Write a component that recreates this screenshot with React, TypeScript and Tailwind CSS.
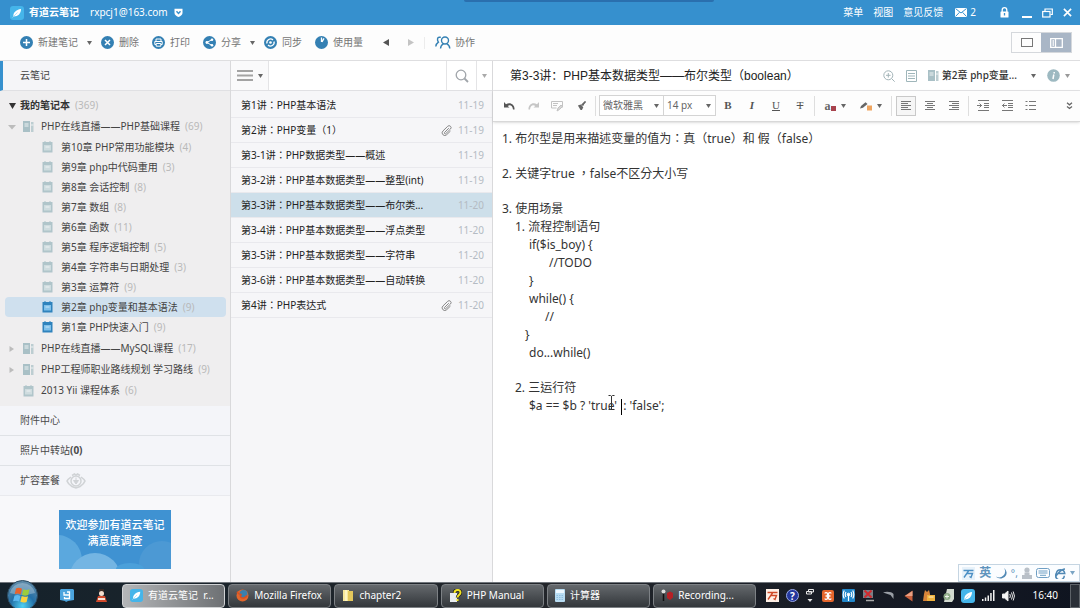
import { useState, type ReactNode } from "react";
import clsx from "clsx";

type Leaf = { name: string; count: number; mine?: boolean };
type Note = { title: string; date: string; clip?: boolean };

const chapters: Leaf[] = [
  { name: "第10章 PHP常用功能模块", count: 4 },
  { name: "第9章 php中代码重用", count: 3 },
  { name: "第8章 会话控制", count: 8 },
  { name: "第7章 数组", count: 8 },
  { name: "第6章 函数", count: 11 },
  { name: "第5章 程序逻辑控制", count: 5 },
  { name: "第4章 字符串与日期处理", count: 3 },
  { name: "第3章 运算符", count: 9 },
  { name: "第2章 php变量和基本语法", count: 9, mine: true },
  { name: "第1章 PHP快速入门", count: 9, mine: true },
];

const notes: Note[] = [
  { title: "第1讲：PHP基本语法", date: "11-19" },
  { title: "第2讲：PHP变量（1）", date: "11-19", clip: true },
  { title: "第3-1讲：PHP数据类型——概述", date: "11-19" },
  { title: "第3-2讲：PHP基本数据类型——整型(int)", date: "11-19" },
  { title: "第3-3讲：PHP基本数据类型——布尔类...", date: "11-20" },
  { title: "第3-4讲：PHP基本数据类型——浮点类型", date: "11-20" },
  { title: "第3-5讲：PHP基本数据类型——字符串", date: "11-20" },
  { title: "第3-6讲：PHP基本数据类型——自动转换", date: "11-20" },
  { title: "第4讲：PHP表达式", date: "11-20", clip: true },
];

function Caret({ className = "text-[#666]" }: { className?: string }) {
  return (
    <svg viewBox="0 0 5 4" className={clsx("h-1 w-[5px] shrink-0", className)} fill="currentColor">
      <path d="M0 0h5L2.5 4z" />
    </svg>
  );
}

/* ---------- title bar ---------- */

function Leafmark({ className }: { className: string }) {
  return (
    <svg viewBox="0 0 14 14" className={className}>
      <rect width="14" height="14" rx="3" fill="#45b5ea" />
      <path d="M3.500 10.500C2.600 7 6 3.500 11 3c0 4.500-2.800 7.600-7.500 7.500z" fill="#fff" />
      <path d="M2.500 11.500L7.500 6.500" stroke="#a5dcf5" strokeWidth=".8" />
    </svg>
  );
}

function TitleBar() {
  return (
    <header className="relative flex h-[25px] shrink-0 items-center bg-[#3690ce] pl-[10px] pr-2 text-[10px] text-white">
      <div className="absolute left-[43%] top-0 h-[2px] w-[250px] rounded-b bg-[#2a6fae]" />
      <Leafmark className="h-[14px] w-[14px]" />
      <span className="ml-[5px] font-bold">有道云笔记</span>
      <span className="ml-[11px]">rxpcj1@163.com</span>
      <svg viewBox="0 0 9 9" className="ml-[6px] h-[9px] w-[9px]">
        <path d="M.5.8h8v4.200C8.500 7 6 8.500 4.500 9 3 8.500.5 7 .5 5z" fill="#fff" />
        <path d="M2.500 3.200l2 2.300 2-2.300" stroke="#3690ce" strokeWidth="1.400" fill="none" />
      </svg>

      <nav className="ml-auto flex items-center gap-[10px]">
        <button type="button">菜单</button>
        <button type="button">视图</button>
        <button type="button">意见反馈</button>
        <button type="button" aria-label="消息" className="ml-0.5 flex items-center gap-[3px]">
          <svg viewBox="0 0 12 9" className="h-[9px] w-3">
            <rect width="12" height="9" fill="#fff" />
            <path d="M.5.5L6 5l5.500-4.500M.5 8.500l4-4.200M11.500 8.500l-4-4.200" stroke="#3690ce" fill="none" />
          </svg>
          2
        </button>
      </nav>
      <div className="ml-6 flex items-center gap-[10px]">
        <button type="button" aria-label="锁定">
          <svg viewBox="0 0 9 11" className="h-[11px] w-[9px]">
            <path d="M2.200 5V3a2.300 2.300 0 014.600 0v2" stroke="#fff" strokeWidth="1.300" fill="none" />
            <rect x=".5" y="4.500" width="8" height="6" rx=".6" fill="#fff" />
            <path d="M4.500 6v2.500" stroke="#3690ce" strokeWidth="1.300" />
          </svg>
        </button>
        <button type="button" aria-label="最小化" className="ml-[3px] flex h-[10px] w-[10px] items-end">
          <span className="h-[2px] w-full bg-white" />
        </button>
        <button type="button" aria-label="还原">
          <svg viewBox="0 0 11 10" className="h-[10px] w-[11px]" fill="none" stroke="#fff" strokeWidth="1.200">
            <path d="M3 3V1h7.300v5.500H8.500" />
            <rect x=".7" y="3.500" width="7.300" height="5.500" />
          </svg>
        </button>
        <button type="button" aria-label="关闭">
          <svg viewBox="0 0 10 10" className="h-[9px] w-[9px]" stroke="#fff" strokeWidth="1.800">
            <path d="M1 1l8 8M9 1L1 9" />
          </svg>
        </button>
      </div>
    </header>
  );
}

/* ---------- main toolbar ---------- */

function Disc({ children }: { children: ReactNode }) {
  return (
    <svg viewBox="0 0 13 13" className="h-[13px] w-[13px]" fill="none" stroke="#fff" strokeWidth="1.500">
      <circle cx="6.500" cy="6.500" r="6.500" fill="#3480b3" stroke="none" />
      {children}
    </svg>
  );
}

function ToolItem({ icon, label, menu }: { icon: ReactNode; label: string; menu?: boolean }) {
  return (
    <>
      <button type="button" className={clsx("flex items-center gap-[5px]", !menu && "mr-[13px]")}>
        {icon}
        {label}
      </button>
      {menu && (
        <button type="button" aria-label={`${label}选项`} className="flex h-5 w-[23px] items-center justify-center">
          <Caret />
        </button>
      )}
    </>
  );
}

function Toolbar() {
  return (
    <div className="flex h-9 shrink-0 items-center border-b border-[#dedee0] bg-[#fdfdfd] pl-5 pr-2 text-[10px] text-[#757575]">
      <ToolItem menu label="新建笔记" icon={<Disc><path d="M6.500 3v7M3 6.500h7" /></Disc>} />
      <ToolItem label="删除" icon={<Disc><path d="M4 4l5 5M9 4L4 9" /></Disc>} />
      <ToolItem
        label="打印"
        icon={
          <Disc>
            <path d="M4 5V3h5v2M4 8.500H2.800V5.500h7.400v3H9M4.200 7.500h4.600v2.700H4.200z" strokeWidth="1" />
          </Disc>
        }
      />
      <ToolItem
        menu
        label="分享"
        icon={
          <Disc>
            <path d="M9 3.500L4 6.500l5 3" strokeWidth="1" />
            <g fill="#fff" stroke="none">
              <circle cx="9" cy="3.700" r="1.300" />
              <circle cx="3.900" cy="6.500" r="1.400" />
              <circle cx="9" cy="9.300" r="1.300" />
            </g>
          </Disc>
        }
      />
      <ToolItem
        label="同步"
        icon={
          <Disc>
            <path d="M3 7.500A3.600 3.600 0 019 4M10 5.500A3.600 3.600 0 014 9" strokeWidth="1.300" />
            <circle cx="6.500" cy="6.500" r="1.300" fill="#fff" stroke="none" />
          </Disc>
        }
      />
      <ToolItem
        label="使用量"
        icon={
          <Disc>
            <path d="M6.500 6V1.500M7 6l2-3.600" strokeWidth="1.300" />
          </Disc>
        }
      />
      <button type="button" aria-label="后退" className="flex h-5 w-5 items-center justify-center text-[#555]">
        <svg viewBox="0 0 6 7" className="h-[7px] w-[6px]" fill="currentColor"><path d="M6 0v7L0 3.500z" /></svg>
      </button>
      <button type="button" aria-label="前进" className="ml-[5px] flex h-5 w-5 items-center justify-center text-[#c4c4c4]">
        <svg viewBox="0 0 6 7" className="h-[7px] w-[6px]" fill="currentColor"><path d="M0 0v7l6-3.500z" /></svg>
      </button>
      <span className="ml-[3px] mr-[10px] h-3 w-px bg-[#ececec]" />
      <button type="button" className="flex items-center gap-1">
        <svg viewBox="0 0 16 13" className="h-[13px] w-4" fill="none" stroke="#3480b3" strokeWidth="1.400">
          <circle cx="10" cy="4.500" r="3.500" />
          <path d="M5.500 12.500c.2-2.600 1.500-4 3-4.600M14.800 12.500c-.2-2.600-1.400-4-3-4.600M5.800 1.300H4.200C2.300 1.300 1.900 4 3.400 6.200 2.200 7 1 8.300 .8 10.500" />
        </svg>
        协作
      </button>

      <div className="ml-auto flex h-[21px] border border-[#d5d8dc]">
        <button type="button" aria-label="单栏" className="flex w-[29px] items-center justify-center">
          <span className="h-[9px] w-3 border border-[#777]" />
        </button>
        <button type="button" aria-label="双栏" aria-pressed="true" className="flex w-[30px] items-center justify-center bg-[#a9b6c6]">
          <svg viewBox="0 0 13 10" className="h-[10px] w-[13px]" fill="none" stroke="#fff" strokeWidth="1.300">
            <path d="M.7.7h11.600v8.600H.7zM5.500 1v8M2.500 3h1.500M2.500 5h1.500M2.500 7h1.500" />
          </svg>
        </button>
      </div>
    </div>
  );
}

/* ---------- sidebar ---------- */

function BookIcon() {
  return (
    <svg viewBox="0 0 11 11" className="h-[11px] w-[11px] shrink-0">
      <path d="M0 0h7v11H0z" fill="#a9c0c6" />
      <path d="M8 1h2.500v10H8z" fill="#bccdd1" />
      <path d="M1.500 3h4M1.500 5h4" stroke="#edf2f3" />
      <path d="M8 4h2.500" stroke="#edf2f3" />
    </svg>
  );
}

function PadIcon({ active }: { active?: boolean }) {
  return (
    <svg viewBox="0 0 11 12" className={clsx("h-3 w-[11px] shrink-0", active ? "text-[#2f83bd]" : "text-[#b0c5ca]")}>
      <path d="M.5 1h10v10.500H.5z" fill="currentColor" />
      <path d="M3 0v1.500M8 0v1.500" stroke="currentColor" />
      <path d="M2 4h7v5.500H2z" fill={active ? "#7fc0ea" : "#cfdcdf"} />
      <path d="M3.500 6h4" stroke={active ? "#c9e6f7" : "#eef2f3"} />
    </svg>
  );
}

function Count({ n }: { n: number }) {
  return <span className="ml-[5px] text-[#b9b9b9]">({n})</span>;
}

function ParentRow({ name, count, open, leaf }: { name: string; count: number; open?: boolean; leaf?: boolean }) {
  return (
    <button type="button" className="flex h-[21px] w-full items-center pl-2">
      <span className="mr-[7px] flex w-2 text-[#bcbcbc]">
        {!leaf && (
          <svg viewBox="0 0 8 8" className="h-2 w-2" fill="currentColor">
            <path d={open ? "M0 2h8L4 6.500z" : "M1.500 1v6L6 4z"} />
          </svg>
        )}
      </span>
      {leaf ? <PadIcon /> : <BookIcon />}
      <span className="ml-[7px]">{name}</span>
      <Count n={count} />
    </button>
  );
}

function Sidebar() {
  const [selected, setSelected] = useState(8);

  return (
    <aside className="flex w-[231px] shrink-0 flex-col border-r border-[#d9d9db] bg-[#f8f8fa] text-[10px] text-[#444]">
      <a href="#cloud" className="flex h-[30px] shrink-0 items-center border-b border-l-3 border-b-[#e0e0e3] border-l-[#3690ce] bg-[#f5f5f8] pl-[17px]">
        云笔记
      </a>

      <div className="min-h-0 flex-1 overflow-hidden bg-[#efeeef] pt-1">
        <button type="button" className="flex h-[21px] items-center pl-[9px] font-bold text-[#333]">
          <svg viewBox="0 0 7 6" className="mr-1 h-[6px] w-[7px]" fill="currentColor"><path d="M0 0h7L3.500 6z" /></svg>
          我的笔记本
          <span className="font-normal"><Count n={369} /></span>
        </button>
        <ParentRow open name="PHP在线直播——PHP基础课程" count={69} />
        <ul className="pb-px pl-[5px] pr-1">
          {chapters.map((c, i) => (
            <li key={c.name}>
              <button
                type="button"
                onClick={() => setSelected(i)}
                className={clsx("flex h-5 w-full items-center rounded-sm pl-[37px]", i === selected && "bg-[#cfe0ee]")}
              >
                <PadIcon active={c.mine} />
                <span className="ml-2">{c.name}</span>
                <Count n={c.count} />
              </button>
            </li>
          ))}
        </ul>
        <ParentRow name="PHP在线直播——MySQL课程" count={17} />
        <ParentRow name="PHP工程师职业路线规划 学习路线" count={9} />
        <ParentRow leaf name="2013 Yii 课程体系" count={6} />
      </div>

      <nav className="shrink-0 bg-[#f4f5f9] text-[#4a4a4a]">
        <a href="#files" className="flex h-[30px] items-center border-b border-[#dfe2e6] pl-5">附件中心</a>
        <a href="#photos" className="flex h-[30px] items-center border-b border-[#dfe2e6] pl-5">照片中转站<b>(0)</b></a>
        <a href="#plans" className="flex h-[30px] items-center border-b border-[#e9eaee] pl-5">
          扩容套餐
          <svg viewBox="0 0 20 16" className="ml-[6px] h-4 w-5" fill="none" stroke="#d0d3d6" strokeWidth="1.500">
            <path d="M6 2.500L8.500 1l1.500 1 1.500-1L14 2.500M5 4L2 6.500 1 8l1.500 2.500L6 13.500l4 1.500 4-1.500 3.500-3L19 8l-1-1.500L15 4" />
            <circle cx="10" cy="8" r="5" />
            <path d="M10 4.500v3M7.500 7.500h5L10 11z" fill="#d0d3d6" strokeWidth="1" />
          </svg>
        </a>
      </nav>

      <div className="shrink-0 px-[59px] pb-[13px] pt-[14px]">
        <a href="#survey" className="relative flex h-[59px] justify-center overflow-hidden bg-[#3f92d2] pt-[7px] text-center text-[11px] font-medium leading-4 text-white">
          <svg viewBox="0 0 112 59" preserveAspectRatio="none" className="absolute inset-0 h-full w-full">
            <circle cx="103" cy="54" r="23" fill="#4c99d4" />
            <circle cx="-2" cy="50" r="25" fill="#5ba8de" />
            <circle cx="36" cy="69" r="26" fill="#74b5e3" />
            <ellipse cx="71" cy="59" rx="14" ry="6" fill="#4ba0da" />
          </svg>
          <span className="relative whitespace-nowrap">欢迎参加有道云笔记<br />满意度调查</span>
        </a>
      </div>
    </aside>
  );
}

/* ---------- note list ---------- */

function NoteList() {
  const [selected, setSelected] = useState(4);

  return (
    <section className="flex w-[262px] shrink-0 flex-col border-r border-[#d9d9db] bg-[#f6f6f8]">
      <div className="flex h-[30px] shrink-0 items-stretch border-b border-[#e0e0e3] bg-white">
        <button type="button" aria-label="列表视图" className="flex w-[38px] items-center justify-center gap-[5px] border-r border-[#e4e4e6] bg-[#fafafb]">
          <svg viewBox="0 0 16 11" className="h-[11px] w-4" stroke="#a3a3a3" strokeWidth="2">
            <path d="M0 1h16M0 5.500h16M0 10h16" />
          </svg>
          <Caret />
        </button>
        <input type="text" aria-label="搜索笔记" className="min-w-0 flex-1 bg-white px-2 text-[10px] outline-none" />
        <button type="button" aria-label="搜索" className="flex w-[31px] items-center justify-center border-x border-[#e4e4e6]">
          <svg viewBox="0 0 14 14" className="h-[14px] w-[14px]" fill="none" stroke="#a0a5aa" strokeWidth="1.300">
            <circle cx="6" cy="6" r="4.800" />
            <path d="M9.500 9.500l3.500 3.500" strokeWidth="1.800" />
          </svg>
        </button>
        <button type="button" aria-label="搜索选项" className="flex w-[15px] items-center justify-center">
          <Caret className="text-[#aaa]" />
        </button>
      </div>
      <ul lang="zh-TW" className="pt-0.5 font-['Noto_Sans','Noto_Sans_CJK_TC',sans-serif] text-[10px] text-[#222]">
        {notes.map((n, i) => (
          <li key={n.title}>
            <button
              type="button"
              onClick={() => setSelected(i)}
              className={clsx(
                "flex h-[25px] w-full items-center border-b border-[#e9e9ed] pl-[10px] pr-2 text-left",
                i === selected && "bg-[#cddfea]"
              )}
            >
              <span className="flex-1 truncate">{n.title}</span>
              {n.clip && (
                <svg viewBox="0 0 11 11" className="mr-[6px] h-[11px] w-[11px]" fill="none" stroke="#888" strokeWidth="1">
                  <path d="M7.800 3.200L3.600 7.400a.8.8 0 001.200 1.200L9.500 4a1.900 1.900 0 00-2.800-2.700L1.900 6a2.600 2.600 0 003.800 3.700L9.500 6" />
                </svg>
              )}
              <time className="text-[#b4bbc3]">{n.date}</time>
            </button>
          </li>
        ))}
      </ul>
    </section>
  );
}

/* ---------- editor ---------- */

function EditButton({ label, active, wide, children }: { label: string; active?: boolean; wide?: boolean; children: ReactNode }) {
  return (
    <button
      type="button"
      aria-label={label}
      className={clsx("flex h-5 shrink-0 items-center justify-center gap-[5px]", wide ? "w-9" : "w-6")}
    >
      {active ? <span className="flex h-5 w-5 items-center justify-center border border-[#c9c9c9] bg-[#f6f6f6]">{children}</span> : children}
    </button>
  );
}

function Sep() {
  return <span className="mx-[2px] h-5 w-px shrink-0 bg-[#dedede]" />;
}

function Lines({ d }: { d: string }) {
  return (
    <svg viewBox="0 0 12 11" className="h-[11px] w-3" fill="none" stroke="#777" strokeWidth="1">
      <path d={d} />
    </svg>
  );
}

function PickBox({ label, value, options, width }: { label: string; value: string; options: string[]; width: string }) {
  return (
    <div className={clsx("relative -ml-px flex h-[21px] shrink-0 items-center border border-[#d4d4d4] bg-white", width)}>
      <select aria-label={label} defaultValue={value} className="h-full w-full appearance-none pl-[3px] text-[10px] text-[#666] outline-none">
        {options.map((o) => (
          <option key={o}>{o}</option>
        ))}
      </select>
      <Caret className="pointer-events-none absolute right-1 text-[#666]" />
    </div>
  );
}

function FormatBar() {
  return (
    <div className="flex h-[31px] shrink-0 items-center overflow-hidden border-b border-[#d8d8d8] bg-[#fdfdfd] pb-px pl-1 pr-[7px] shadow-sm">
      <EditButton label="撤销">
        <svg viewBox="0 0 11 9" className="h-[9px] w-[11px]"><path d="M0 1v5.500h5.500L3.700 5C6 3.500 8.500 4.500 9 8.500h1.500C11 3.500 6 .5 2 3.200z" fill="#555" /></svg>
      </EditButton>
      <EditButton label="重做">
        <svg viewBox="0 0 11 9" className="h-[9px] w-[11px]"><path d="M11 1v5.500H5.500L7.300 5C5 3.500 2.500 4.500 2 8.500H.5C0 3.500 5 .5 9 3.200z" fill="#c6c6c6" /></svg>
      </EditButton>
      <EditButton label="格式刷">
        <svg viewBox="0 0 12 12" className="h-3 w-3" fill="none" stroke="#c3c3c3">
          <path d="M.5 1.500h11v6M.5 1.500v6.500h5M2 3.500h5M2 5.500h4" />
          <path d="M6 11l1-3 3-3 1.500 1.500-3 3z" fill="#d5d5d5" />
        </svg>
      </EditButton>
      <EditButton label="清除格式">
        <svg viewBox="0 0 10 10" className="h-[9px] w-[9px]"><path d="M9.500 0L5.500 4 7 5.500zM1 5l3-1 3 3-1.500 3H4z" fill="#666" /><path d="M9.500.5L5 5" stroke="#666" strokeWidth="1.800" /></svg>
      </EditButton>
      <Sep />
      <div className="ml-px flex pl-px">
        <PickBox label="字体" value="微软雅黑" options={["微软雅黑", "宋体"]} width="w-[65px]" />
        <PickBox label="字号" value="14 px" options={["12 px", "14 px", "16 px"]} width="w-[53px]" />
      </div>
      <div className="flex font-['Liberation_Serif',serif] text-[11px] text-[#555]">
        <EditButton label="粗体"><b>B</b></EditButton>
        <EditButton label="斜体"><b><i>I</i></b></EditButton>
        <EditButton label="下划线"><span className="underline">U</span></EditButton>
        <EditButton label="删除线"><span className="line-through">T</span></EditButton>
      </div>
      <Sep />
      <EditButton wide label="文字颜色">
        <span className="flex items-end font-['Liberation_Serif',serif] text-xs leading-3 font-bold text-[#666]">
          a<span className="mb-px h-[5px] w-[5px] bg-[#a8434d]" />
        </span>
        <Caret />
      </EditButton>
      <EditButton wide label="背景颜色">
        <svg viewBox="0 0 12 10" className="h-[10px] w-3">
          <path d="M0 7.500l1-2.500L5.500 1.200 7.500 3 3 6.800z" fill="#666" />
          <rect x="7" y="4.500" width="5" height="5" fill="#efa560" />
        </svg>
        <Caret />
      </EditButton>
      <Sep />
      <EditButton active label="左对齐"><Lines d="M1 1.500h10M1 3.500h7M1 5.500h10M1 7.500h7M1 9.500h10" /></EditButton>
      <EditButton label="居中"><Lines d="M1 1.500h10M3 3.500h6M1 5.500h10M3 7.500h6M1 9.500h10" /></EditButton>
      <EditButton label="右对齐"><Lines d="M1 1.500h10M4 3.500h7M1 5.500h10M4 7.500h7M1 9.500h10" /></EditButton>
      <Sep />
      <EditButton label="增加缩进"><Lines d="M1 .5h11M7 3.500h5M7 5.500h5M7 7.500h5M1 10.500h11M0 5.500h5M2.500 3.500l2 2-2 2" /></EditButton>
      <EditButton label="减少缩进"><Lines d="M1 .5h11M7 3.500h5M7 5.500h5M7 7.500h5M1 10.500h11M1 5.500h5M3.500 3.500l-2 2 2 2" /></EditButton>
      <EditButton label="列表"><Lines d="M4 1.500h7M4 5.500h7M4 9.500h7M.5 1.500h2M.5 5.500h2M.5 9.500h2" /></EditButton>
      <button type="button" aria-label="更多" className="ml-auto">
        <svg viewBox="0 0 7 8" className="h-2 w-[7px]" fill="none" stroke="#666" strokeWidth="1.300"><path d="M1 .8l2.500 2L6 .8M1 4.500l2.500 2L6 4.500" /></svg>
      </button>
    </div>
  );
}

function Editor() {
  return (
    <main className="relative flex min-w-0 flex-1 flex-col bg-white">
      <div className="flex h-[30px] shrink-0 items-center border-b border-[#e4e4e6] pl-[17px] pr-[10px]">
        <h1 className="truncate font-['Liberation_Sans','Noto_Sans_CJK_SC',sans-serif] text-xs text-[#222]">
          第3-3讲：PHP基本数据类型——布尔类型（boolean）
        </h1>
        <div className="ml-auto flex shrink-0 items-center text-[10px] text-[#333]">
          <button type="button" aria-label="放大">
            <svg viewBox="0 0 12 12" className="h-3 w-3" fill="none" stroke="#a3b4b8">
              <circle cx="5.300" cy="5.300" r="4.500" />
              <path d="M3 5.300h4.600M5.300 3v4.600M8.700 8.700l3 3" />
            </svg>
          </button>
          <button type="button" aria-label="目录" className="ml-[11px]">
            <svg viewBox="0 0 11 12" className="h-3 w-[11px]" fill="none" stroke="#9fb6ba">
              <path d="M.5.5h10v11H.5zM2 3.500h7M2 6h7M2 8.500h7" />
            </svg>
          </button>
          <button type="button" className="ml-[11px] flex items-center">
            <BookIcon />
            <span className="ml-[3px] font-medium">第2章 php变量...</span>
            <Caret className="ml-[14px] text-[#666]" />
          </button>
          <button type="button" aria-label="笔记信息" className="ml-[11px] flex items-center gap-[5px]">
            <svg viewBox="0 0 13 13" className="h-[13px] w-[13px]">
              <circle cx="6.500" cy="6.500" r="6.300" fill="#9db9c1" />
              <path d="M7.200 3v1.500M6.800 5.500L6 10" stroke="#fff" strokeWidth="1.500" />
            </svg>
            <Caret className="text-[#999]" />
          </button>
        </div>
      </div>
      <FormatBar />

      <article
        lang="zh-TW"
        className="min-h-0 flex-1 overflow-hidden whitespace-pre pl-[9px] pt-2 font-['Noto_Sans','Noto_Sans_CJK_TC',sans-serif] text-xs leading-[18px] text-[#333]"
      >
        <p>1. 布尔型是用来描述变量的值为：真（true）和 假（false）</p>
        <p className="mt-[17px]">2. 关键字true ，false不区分大小写</p>
        <p className="mt-[17px]">3. 使用场景</p>
        <div className="pl-[13px]">
          <p>1. 流程控制语句</p>
          <div className="pl-[14px]">
            <p>if($is_boy) {"{"}</p>
            <p className="pl-5">//TODO</p>
            <p>{"}"}</p>
            <p>while() {"{"}</p>
            <p className="pl-4">//</p>
          </div>
          <p className="pl-[10px]">{"}"}</p>
          <p className="pl-[14px]">do...while()</p>
          <p className="mt-[17px]">2. 三运行符</p>
          <p className="pl-[14px]">
            $a == $b ? 'tr
            <span className="relative">
              u
              <svg viewBox="0 0 7 15" className="absolute bottom-1 left-2 h-[15px] w-[7px]" fill="none" stroke="#333">
                <path d="M.5.5h2l1 .8 1-.8h2M3.500 1v13M.5 14.500h2l1-.8 1 .8h2" />
              </svg>
            </span>
            e'{" "}
            <span className="mx-px inline-block h-4 w-px bg-black align-middle" />: 'false';
          </p>
        </div>
      </article>

      <ImeBar />
    </main>
  );
}

function ImeBar() {
  return (
    <div className="absolute bottom-0 right-0 flex h-[18px] w-[122px] items-center justify-between border border-[#c5d5e2] bg-[#fbfdff] pl-[3px] pr-1 text-[#5f94bd]">
      <WanIcon className="h-[13px] w-[13px]" bg="#e8f2fa" ink="#4b8fc4" />
      <span className="text-xs font-bold leading-none">英</span>
      <svg viewBox="0 0 11 11" className="h-[11px] w-[11px]"><path d="M8 0a6 6 0 01-8 8.500C4 13 11.500 9 10.500 4 10 2 9 .8 8 0z" fill="#5189b5" /></svg>
      <span className="text-[10px] leading-none">°,</span>
      <svg viewBox="0 0 10 12" className="h-3 w-[10px]" fill="#b9c0c8"><circle cx="5" cy="3" r="2.600" /><path d="M2.500 5.500h5V8H10v4H0V8h2.500z" /></svg>
      <svg viewBox="0 0 14 10" className="h-[10px] w-[14px]" fill="none" stroke="#6f9fc4"><rect x=".5" y=".5" width="13" height="9" rx="2" /><path d="M2.500 3h9M2.500 5h9M4 7.300h6" /></svg>
      <svg viewBox="0 0 11 11" className="h-[11px] w-[11px]" fill="none" stroke="#5189b5" strokeWidth="1.500"><path d="M9.300 7.800A4.300 4.300 0 111.300 5.500 4.300 4.300 0 019.800 5.500H3M1 10C0 8 6 1 10 1" /></svg>
      <Caret className="text-[#7aa4c4]" />
    </div>
  );
}

function WanIcon({ className, bg, ink }: { className: string; bg: string; ink: string }) {
  return (
    <svg viewBox="0 0 13 13" className={className} fill="none" stroke={ink} strokeWidth="1.400">
      <rect width="13" height="13" fill={bg} stroke="none" />
      <path d="M1.500 3.500h10M6.500 4L2 10.500M5 6.500h5.500L9 10.500 7.500 9.500" />
    </svg>
  );
}

/* ---------- taskbar ---------- */

const tasks: { label: string; active?: boolean; icon: ReactNode }[] = [
  { label: "有道云笔记  r...", active: true, icon: <Leafmark className="h-[13px] w-[13px] shrink-0" /> },
  {
    label: "Mozilla Firefox",
    icon: (
      <svg viewBox="0 0 13 13" className="h-[13px] w-[13px] shrink-0">
        <circle cx="6.500" cy="6.500" r="6" fill="#e2662c" />
        <circle cx="7.500" cy="5" r="4" fill="#3a7fae" />
        <path d="M1 3c1 1 1.500 2 4 2.500L4.500 8c2 2 5 1 6.500-1.500" fill="none" stroke="#d9501f" strokeWidth="1.500" />
      </svg>
    ),
  },
  {
    label: "chapter2",
    icon: (
      <svg viewBox="0 0 12 13" className="h-[13px] w-3 shrink-0">
        <path d="M1 1h6v11H1z" fill="#f6e79a" />
        <path d="M6 2h5v10H6z" fill="#e3c75c" />
        <path d="M4 1v11" stroke="#fff8cf" strokeWidth="1.500" />
      </svg>
    ),
  },
  {
    label: "PHP Manual",
    icon: (
      <svg viewBox="0 0 13 14" className="h-[14px] w-[13px] shrink-0" fill="none">
        <path d="M1 4h7v9H1z" fill="#e9edf0" />
        <path d="M5.500 4c0-4 6-4 6-.5 0 2.500-3 2.500-3 5" stroke="#222" strokeWidth="3.500" />
        <path d="M5.500 4c0-4 6-4 6-.5 0 2.500-3 2.500-3 5M8.500 10v2" stroke="#f3e521" strokeWidth="2" />
      </svg>
    ),
  },
  {
    label: "计算器",
    icon: (
      <svg viewBox="0 0 10 13" className="h-[13px] w-[10px] shrink-0">
        <rect width="10" height="13" rx="1" fill="#b8dcf2" />
        <path d="M1 1h8v3H1z" fill="#eef8ff" />
        <path d="M1.500 6.500h7M1.500 8.500h7M1.500 10.500h7" stroke="#8fbfe0" strokeDasharray="1.500 1" />
      </svg>
    ),
  },
  {
    label: "Recording...",
    icon: (
      <svg viewBox="0 0 12 13" className="h-[13px] w-3 shrink-0">
        <path d="M2.500 3v9" stroke="#111" strokeWidth="1.500" />
        <circle cx="2.500" cy="2.500" r="2" fill="#ddd" />
        <path d="M6 4l3-1.500L12 4v4.500L9 11 6 9z" fill="#b52025" />
      </svg>
    ),
  },
];

const tray: { label: string; narrow?: boolean; icon: ReactNode }[] = [
  { label: "万能五笔", icon: <WanIcon className="h-[13px] w-[13px]" bg="#fff0e6" ink="#cf4a28" /> },
  {
    label: "帮助",
    icon: (
      <span className="flex h-[13px] w-[13px] items-center justify-center rounded-full border border-[#99a8e6] bg-[#24389e] text-[10px] font-bold leading-none text-white">?</span>
    ),
  },
  {
    label: "还原",
    narrow: true,
    icon: (
      <svg viewBox="0 0 8 14" className="h-[14px] w-2" fill="none" stroke="#e8e8e8">
        <path d="M2.500 .5h5v2.500h-5zM.5 2.500h5V5h-5z" />
        <path d="M1.500 10h5L4 13z" fill="#e8e8e8" stroke="none" />
      </svg>
    ),
  },
  {
    label: "XAMPP",
    icon: (
      <svg viewBox="0 0 12 12" className="h-3 w-3" fill="none" stroke="#fff" strokeWidth="1.300">
        <rect width="12" height="12" rx="2" fill="#e5662c" stroke="none" />
        <path d="M3 3.500C3 2.300 5.500 2.300 5.500 4v4c0 1.700-2.500 1.700-2.500.5M9 3.500C9 2.300 6.500 2.300 6.500 4v4c0 1.700 2.500 1.700 2.500.5M3.500 6h5" />
      </svg>
    ),
  },
  {
    label: "无线",
    icon: (
      <svg viewBox="0 0 13 13" className="h-[13px] w-[13px]" fill="none" stroke="#fff">
        <rect width="13" height="13" rx="1" fill="#2287c9" stroke="none" />
        <circle cx="6.500" cy="5.500" r="1.300" fill="#fff" />
        <path d="M6.500 6v6M4 3Q2.500 5.500 4 8M9 3q1.500 2.500 0 5M2.300 1.500Q0 5.500 2.300 9.500M10.700 1.500q2.300 4 0 8" strokeWidth="1.200" />
      </svg>
    ),
  },
  {
    label: "网络断开",
    icon: (
      <svg viewBox="0 0 13 13" className="h-[13px] w-[13px]" fill="none">
        <path d="M1 1h10v8H1z" fill="#7b7f86" />
        <path d="M4 11.500h8" stroke="#aaa" strokeWidth="1.500" />
        <path d="M2.500 1.500l7 7M9.500 1.500l-7 7" stroke="#d22a2f" strokeWidth="2" />
      </svg>
    ),
  },
  { label: "设备", icon: <svg viewBox="0 0 11 9" className="h-[9px] w-[11px]"><path d="M0 1.500C4 0 9 1 10.500 3v5L7.500 4z" fill="#9a9fa6" /></svg> },
  { label: "播放", icon: <svg viewBox="0 0 9 12" className="h-3 w-[9px]"><path d="M8.500.5v11L.5 6z" fill="#c9603d" /><path d="M8.500 1v5H1z" fill="#e8a083" /></svg> },
  {
    label: "助手",
    icon: (
      <svg viewBox="0 0 13 13" className="h-[13px] w-[13px]">
        <path d="M2 5l1-4 2 2 2-2 1 4v7H1z" fill="#d8843a" />
        <path d="M5 6h8v6H5z" fill="#f0b23e" />
        <path d="M6.500 8h5" stroke="#fff3cc" />
      </svg>
    ),
  },
  {
    label: "更新",
    icon: (
      <svg viewBox="0 0 13 13" className="h-[13px] w-[13px]">
        <path d="M5 0h7v10l-2 3H2z" fill="#d3dad0" />
        <circle cx="5" cy="7.500" r="3.500" fill="#8aa884" />
        <path d="M3 7.500h4M5 5.500v4" stroke="#eef3ec" />
      </svg>
    ),
  },
  { label: "有道云笔记", icon: <Leafmark className="h-[14px] w-[14px]" /> },
  {
    label: "信号",
    icon: (
      <svg viewBox="0 0 13 11" className="h-[11px] w-[13px]" fill="#f2f2f2"><path d="M0 9h1.500v2H0zM2.800 7.500h1.500V11H2.800zM5.500 5.500H7V11H5.500zM8.200 3h1.500v8H8.200zM11 0h1.500v11H11z" /></svg>
    ),
  },
  {
    label: "音量",
    icon: (
      <svg viewBox="0 0 13 12" className="h-3 w-[13px]" fill="none" stroke="#e8e8e8">
        <path d="M.5 4h2L6 1v10L2.500 8h-2z" fill="#f5f5f5" />
        <path d="M7.800 4q1.200 2 0 4M9.500 2.500q2 3.500 0 7M11.200 1.500q2.500 4.500 0 9" />
      </svg>
    ),
  },
];

function Taskbar() {
  return (
    <footer className="relative flex h-[26px] shrink-0 items-center border-t border-[#70757b] bg-linear-to-r from-[#15222b] via-[#23262b] to-[#0f1420] text-[10px] text-white">
      <button type="button" aria-label="开始" className="relative -mt-1 ml-[7px] h-[26px] w-[31px] shrink-0">
        <svg viewBox="0 0 31 31" className="absolute bottom-[-4px] left-0 h-[31px] w-[31px]">
          <defs>
            <radialGradient id="orb" cx=".5" cy=".85" r=".8">
              <stop offset="0" stopColor="#4fd0f2" />
              <stop offset=".5" stopColor="#236fa6" />
              <stop offset="1" stopColor="#5d8aa8" />
            </radialGradient>
          </defs>
          <circle cx="15.500" cy="15.500" r="15" fill="url(#orb)" stroke="#2b4a60" />
          <path d="M3 13a12.800 12.800 0 0125 0Q15 17 3 13z" fill="#fff" opacity=".28" />
          <path d="M9 8.500q3-1.500 6 .3l-1.300 5.700q-3-1.600-6-.3z" fill="#e9622b" />
          <path d="M16.200 9.200q3 1.500 6.300 0l-1.300 5.800q-3.300 1.300-6.200-.1z" fill="#9ccc3c" />
          <path d="M7.500 15.500q3-1.300 6 .2l-1.400 5.800q-3-1.500-6-.2z" fill="#5db8f0" />
          <path d="M14.700 16q3 1.500 6.300.2l-1.400 5.700q-3.200 1.300-6.200-.2z" fill="#fbd13c" />
        </svg>
      </button>
      <button type="button" aria-label="聊天" className="ml-[22px]">
        <svg viewBox="0 0 14 13" className="h-[13px] w-[14px]" fill="none" stroke="#fff" strokeWidth="1.300">
          <path d="M1 0h12l1 1v10l-6 1-2 1-1-1-5-1V1z" fill="#4ba4de" stroke="none" />
          <path d="M4 3v3h5.500V3H7M9.500 6v3.500H4.500V8" />
        </svg>
      </button>
      <button type="button" aria-label="游戏" className="ml-[21px]">
        <svg viewBox="0 0 13 13" className="h-[13px] w-[13px]">
          <path d="M4 0h5v5H4z" fill="#3a2b25" />
          <circle cx="6.500" cy="4.500" r="2.500" fill="#f3dfd0" />
          <path d="M1 13l2-6h7l2 6z" fill="#d14a2c" />
          <path d="M3 9h7v2H3z" fill="#f6e3d8" />
        </svg>
      </button>

      <div className="ml-[14px] flex h-6 min-w-0 flex-1 gap-[3px]">
        {tasks.map((t) => (
          <button
            key={t.label}
            type="button"
            className={clsx(
              "flex min-w-0 flex-1 items-center gap-[5px] rounded-sm border pl-[7px] pr-1",
              t.active
                ? "border-[#d0d2d4] bg-linear-to-r from-[#b4b6b8] to-[#6e7174]"
                : "border-[#7d8185] bg-linear-to-b from-[#65696d] to-[#33373b]"
            )}
          >
            {t.icon}
            <span className="truncate whitespace-pre">{t.label}</span>
          </button>
        ))}
      </div>

      <div className="ml-[6px] flex items-center">
        {tray.map((t) => (
          <button
            key={t.label}
            type="button"
            aria-label={t.label}
            className={clsx("flex h-5 shrink-0 items-center justify-center", t.narrow ? "w-4" : "w-5")}
          >
            {t.icon}
          </button>
        ))}
      </div>
      <time className="ml-[14px]">16:40</time>
      <button type="button" aria-label="显示桌面" className="ml-3 h-6 w-[10px] shrink-0 border border-[#5d6268] bg-[#2a2f37]" />
    </footer>
  );
}

export default function App() {
  return (
    <div lang="zh-CN" className="flex h-screen flex-col overflow-hidden bg-white font-['Noto_Sans','Noto_Sans_CJK_SC',sans-serif]">
      <TitleBar />
      <Toolbar />
      <div className="flex min-h-0 flex-1">
        <Sidebar />
        <NoteList />
        <Editor />
      </div>
      <Taskbar />
    </div>
  );
}
